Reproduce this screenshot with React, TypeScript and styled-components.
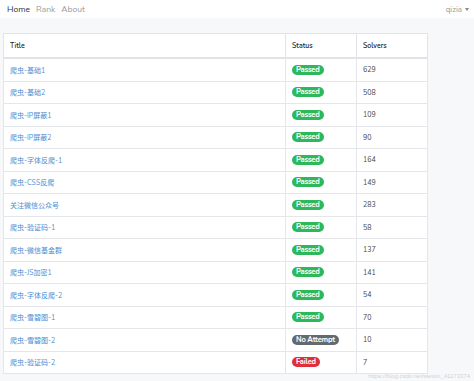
import React from 'react';
import styled, { createGlobalStyle } from 'styled-components';

const GlobalStyle = createGlobalStyle`
  html, body {
    margin: 0;
    padding: 0;
    background: #f7f8fa;
    font-family: "Nunito", "Open Sans", "Noto Sans", "Noto Sans CJK SC", sans-serif;
  }
`;

const Page = styled.div`
  position: relative;
  width: 474px;
  min-height: 381px;
  background: #f7f8fa;
`;

const Navbar = styled.nav`
  height: 18px;
  background: #fff;
  display: flex;
  align-items: center;
  justify-content: space-between;
  padding: 0 5px 0 7px;
`;

const NavLinks = styled.div`
  display: flex;
  gap: 6px;
`;

const NavLink = styled.a<{ $active?: boolean }>`
  font-size: 8.5px;
  color: ${({ $active }) => ($active ? '#333' : '#9a9a9a')};
  text-decoration: none;
`;

const UserMenu = styled.div`
  font-size: 8px;
  color: #9a9a9a;
  display: flex;
  align-items: center;
  gap: 3px;
  &::after {
    content: '';
    border-left: 2.5px solid transparent;
    border-right: 2.5px solid transparent;
    border-top: 3px solid #888;
  }
`;

const Content = styled.div`
  padding: 15px 0 0 3px;
`;

const Table = styled.table`
  width: 425px;
  table-layout: fixed;
  border-collapse: collapse;
  background: #fff;
  border: 1px solid #dcdfe3;
  font-size: 7px;
  color: #444;
`;

const Th = styled.th<{ $w?: number }>`
  text-align: left;
  font-weight: 600;
  color: #222;
  height: 23px;
  padding: 0 0 0 6px;
  border: 1px solid #e1e3e6;
  border-bottom-width: 2px;
  width: ${({ $w }) => ($w ? `${$w}px` : 'auto')};
`;

const Td = styled.td`
  height: 21.5px;
  padding: 0 0 0 6px;
  border: 1px solid #e4e6e9;
`;

const TitleLink = styled.a`
  color: #4a8bd0;
  text-decoration: none;
`;

const badgeColors = {
  Passed: '#2eb85c',
  'No Attempt': '#636a70',
  Failed: '#e02e3a',
} as const;

const Badge = styled.span<{ $status: keyof typeof badgeColors }>`
  display: inline-block;
  background: ${({ $status }) => badgeColors[$status]};
  color: #fff;
  font-weight: 700;
  font-size: 7.5px;
  line-height: 10px;
  padding: 0 4px;
  border-radius: 6px;
  letter-spacing: -0.2px;
`;

const Watermark = styled.span`
  position: absolute;
  right: 4px;
  top: 373px;
  font-size: 6px;
  color: rgba(190, 190, 190, 0.7);
  font-family: "Liberation Sans", sans-serif;
`;

type Status = keyof typeof badgeColors;

const rows: [string, Status, number][] = [
  ['爬虫-基础1', 'Passed', 629],
  ['爬虫-基础2', 'Passed', 508],
  ['爬虫-IP屏蔽1', 'Passed', 109],
  ['爬虫-IP屏蔽2', 'Passed', 90],
  ['爬虫-字体反爬-1', 'Passed', 164],
  ['爬虫-CSS反爬', 'Passed', 149],
  ['关注微信公众号', 'Passed', 283],
  ['爬虫-验证码-1', 'Passed', 58],
  ['爬虫-微信基金群', 'Passed', 137],
  ['爬虫-JS加密1', 'Passed', 141],
  ['爬虫-字体反爬-2', 'Passed', 54],
  ['爬虫-雪碧图-1', 'Passed', 70],
  ['爬虫-雪碧图-2', 'No Attempt', 10],
  ['爬虫-验证码-2', 'Failed', 7],
];

export default function App() {
  return (
    <Page>
      <GlobalStyle />
      <Navbar>
        <NavLinks>
          <NavLink $active>Home</NavLink>
          <NavLink>Rank</NavLink>
          <NavLink>About</NavLink>
        </NavLinks>
        <UserMenu>qizia</UserMenu>
      </Navbar>
      <Content>
        <Table>
          <thead>
            <tr>
              <Th>Title</Th>
              <Th $w={64}>Status</Th>
              <Th $w={64}>Solvers</Th>
            </tr>
          </thead>
          <tbody>
            {rows.map(([title, status, solvers]) => (
              <tr key={title}>
                <Td>
                  <TitleLink>{title}</TitleLink>
                </Td>
                <Td>
                  <Badge $status={status}>{status}</Badge>
                </Td>
                <Td>{solvers}</Td>
              </tr>
            ))}
          </tbody>
        </Table>
      </Content>
      <Watermark>https://blog.csdn.net/weixin_41173374</Watermark>
    </Page>
  );
}
